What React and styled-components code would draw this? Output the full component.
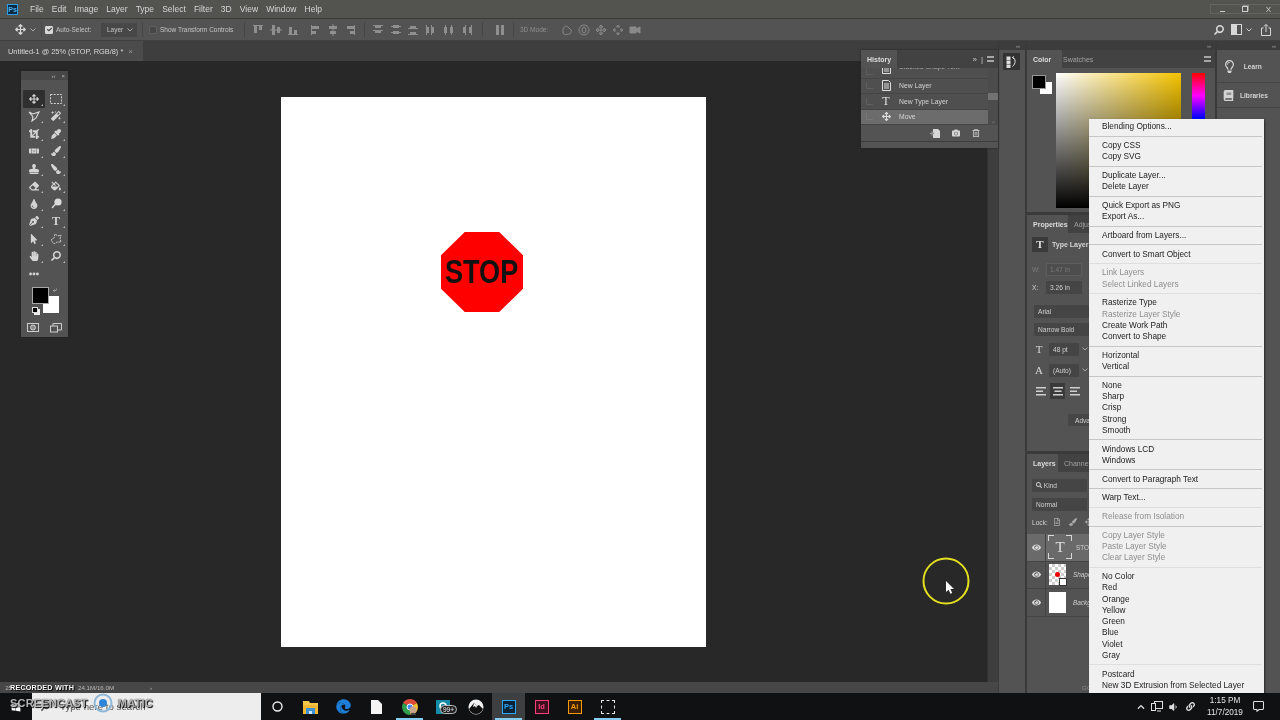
import React from 'react'
import styled, { createGlobalStyle } from 'styled-components'
import {
  FaArrowsAlt, FaMagic, FaCrop, FaEyeDropper, FaBandAid, FaPaintBrush, FaStamp, FaEraser,
  FaFillDrip, FaTint, FaPenNib, FaMousePointer, FaHandPaper, FaSearch, FaEllipsisH, FaEye,
  FaCamera, FaRegTrashAlt, FaRegLightbulb, FaWindows, FaEdge, FaCheck, FaRegFileAlt, FaBook,
  FaLink, FaRegCommentAlt, FaVolumeDown, FaChevronUp,
} from 'react-icons/fa'

const GlobalStyle = createGlobalStyle`
  html, body { margin: 0; padding: 0; background: #282828; }
  * { box-sizing: border-box; }
  #root { width: 1280px; height: 720px; overflow: hidden; }
`

const Screen = styled.div`
  position: relative;
  width: 1280px;
  height: 720px;
  display: flex;
  flex-direction: column;
  overflow: hidden;
  background: #3a3a3a;
  font-family: 'Liberation Sans', Arial, sans-serif;
  color: #d4d4d4;
  filter: blur(0.4px);
`

/* ---------- menu bar ---------- */
const MenuBar = styled.div`
  height: 18px;
  margin-bottom: 1px;
  flex: none;
  display: flex;
  align-items: center;
  padding-left: 7px;
  background: #53534f;
`
const PsLogo = styled.div`
  width: 11px;
  height: 11px;
  margin-right: 12px;
  display: flex;
  align-items: center;
  justify-content: center;
  border: 1px solid #2f9fe8;
  background: #0b2b45;
  color: #4fb4f2;
  font-size: 7px;
  font-weight: bold;
`
const MenuItems = styled.div`
  display: flex;
  gap: 8.1px;
  font-size: 8.5px;
  color: #d6d6d6;
`
const WindowButtons = styled.div`
  margin-left: auto;
  width: 70px;
  height: 10px;
  display: flex;
  align-items: center;
  justify-content: space-around;
  border: 1px solid #63635f;
  border-right: 0;
  font-size: 8px;
  color: #cfcfcf;
`
const MinLine = styled.span`
  width: 5px;
  height: 1px;
  margin-top: 4px;
  background: #cfcfcf;
`
const RestoreBox = styled.span`
  width: 6px;
  height: 6px;
  border: 1px solid #cfcfcf;
  box-shadow: 1px -1px 0 #8a8a86;
`

/* ---------- options bar ---------- */
const OptionsBar = styled.div`
  height: 22px;
  flex: none;
  display: flex;
  align-items: center;
  background: #535353;
  border-bottom: 1px solid #414141;
  font-size: 6.5px;
  color: #c4c4c4;
`
const Slot = styled.div`
  width: ${p => p.$w}px;
  margin-left: ${p => p.$ml || 0}px;
  flex: none;
  display: flex;
  align-items: center;
  justify-content: ${p => p.$left ? 'flex-start' : 'center'};
  color: ${p => p.$dim ? '#8f8f8f' : 'inherit'};
  white-space: nowrap;
`
const Sep = styled.div`
  width: 1px;
  height: 15px;
  flex: none;
  margin-left: ${p => p.$ml || 0}px;
  background: #464646;
`
const Check = styled.div`
  width: 8px;
  height: 8px;
  flex: none;
  margin-left: ${p => p.$ml || 0}px;
  display: flex;
  align-items: center;
  justify-content: center;
  border-radius: 1px;
  background: ${p => p.$on ? '#d8d8d8' : '#474747'};
  border: 1px solid ${p => p.$on ? '#d8d8d8' : '#5f5f5f'};
  color: #333;
  font-size: 5px;
`
const SelectBox = styled.div`
  width: 36px;
  height: 14px;
  margin-left: ${p => p.$ml || 0}px;
  flex: none;
  display: flex;
  align-items: center;
  justify-content: space-between;
  padding: 0 4px 0 6px;
  background: #474747;
`
const RightTools = styled.div`
  margin-left: auto;
  display: flex;
  align-items: center;
  color: #d8d8d8;
`
const FlippedSearch = styled(FaSearch)`
  transform: scaleX(-1);
`

/* ---------- main area ---------- */
const Main = styled.div`
  flex: 1;
  min-height: 0;
  display: flex;
`
const LeftArea = styled.div`
  position: relative;
  width: 998px;
  flex: none;
  display: flex;
  flex-direction: column;
`
const TabBar = styled.div`
  height: 20px;
  flex: none;
  display: flex;
  background: #3e3e3e;
`
const DocTab = styled.div`
  width: 143px;
  display: flex;
  align-items: center;
  gap: 5px;
  padding-left: 8px;
  background: #4b4b4b;
  font-size: 7.4px;
  color: #d8d8d8;
  white-space: nowrap;
`
const TabClose = styled.span`
  color: #999;
  font-size: 8px;
`
const WorkRow = styled.div`
  flex: 1;
  min-height: 0;
  display: flex;
`
const Workspace = styled.div`
  flex: 1;
  background: #282828;
  padding: 36px 0 0 281px;
`
const VScroll = styled.div`
  width: 11px;
  flex: none;
  background: #3e3e3e;
  border-left: 1px solid #333;
`
const Page = styled.div`
  width: 425px;
  height: 550px;
  padding: 135px 0 0 160px;
  background: #fff;
`
const StopSign = styled.div`
  width: 82px;
  height: 80px;
  display: flex;
  align-items: center;
  justify-content: center;
  background: #fe0000;
  clip-path: polygon(29% 0, 71% 0, 100% 29%, 100% 71%, 71% 100%, 29% 100%, 0 71%, 0 29%);
`
const StopWord = styled.span`
  display: inline-block;
  transform: scaleX(0.82);
  font-family: 'Liberation Sans', sans-serif;
  font-weight: bold;
  font-size: 33px;
  color: #111;
`
const StatusBar = styled.div`
  height: 11px;
  flex: none;
  display: flex;
  align-items: center;
  background: #474747;
  font-size: 6.2px;
  color: #b8b8b8;
  white-space: nowrap;
`

/* ---------- floating tools panel ---------- */
const ToolPanel = styled.div`
  position: absolute;
  left: 21px;
  top: 30px;
  width: 47px;
  height: 266px;
  background: #535353;
  box-shadow: 0 0 2px #1c1c1c;
`
const FloatHead = styled.div`
  height: 9px;
  display: flex;
  align-items: center;
  justify-content: flex-end;
  gap: 6px;
  padding-right: 3px;
  background: #474747;
  font-size: 6px;
  line-height: 1;
  color: #b5b5b5;
`
const ToolGrid = styled.div`
  display: grid;
  grid-template-columns: 22px 22px;
  grid-auto-rows: 17.5px;
  margin: 10px 0 0 2px;
`
const ToolCell = styled.div`
  position: relative;
  display: flex;
  align-items: center;
  justify-content: center;
  font-size: 10px;
  color: #d4d4d4;
  background: ${p => p.$sel ? '#2f2f2f' : 'transparent'};
  border-radius: 1px;
  ${p => p.$flip ? 'svg { transform: scaleX(-1); }' : ''}
  &::after {
    content: '';
    display: ${p => p.$plain ? 'none' : 'block'};
    position: absolute;
    right: 2px;
    bottom: 2px;
    border-left: 2px solid transparent;
    border-bottom: 2px solid #bbb;
  }
`
const ToolLetter = styled.span`
  font-family: 'Liberation Serif', serif;
  font-size: 12px;
  font-weight: bold;
`
const ColorChips = styled.div`
  position: relative;
  height: 29px;
  margin: 4px 0 0 11px;
`
const BackChip = styled.div`
  position: absolute;
  left: 11px;
  top: 9px;
  width: 16px;
  height: 17px;
  background: #fff;
`
const ForeChip = styled.div`
  position: absolute;
  left: 0;
  top: 0;
  width: 17px;
  height: 17px;
  background: #000;
  border: 1px solid #a8a8a8;
`
const SwapMark = styled.div`
  position: absolute;
  left: 21px;
  top: -1px;
  font-size: 7px;
  color: #ddd;
`
const DefaultMark = styled.div`
  position: absolute;
  left: 0;
  top: 20px;
  width: 6px;
  height: 6px;
  background: #000;
  border: 1px solid #ddd;
  box-shadow: 2px 2px 0 #eee;
`
const ToolFoot = styled.div`
  display: flex;
  justify-content: space-between;
  padding: 7px 6px 0 6px;
  color: #cfcfcf;
`

/* ---------- floating history panel ---------- */
const HistoryPanel = styled.div`
  position: absolute;
  left: 861px;
  top: 9px;
  width: 137px;
  height: 98px;
  display: flex;
  flex-direction: column;
  background: #535353;
  box-shadow: 0 0 2px #222;
`
const PanelTabs = styled.div`
  height: 18px;
  flex: none;
  display: flex;
  align-items: center;
  background: #424242;
  font-size: 7px;
  color: #a9a9a9;
`
const PanelTab = styled.div`
  height: 100%;
  width: ${p => p.$w}px;
  display: flex;
  align-items: center;
  padding-left: ${p => p.$pl || 6}px;
  flex: none;
  font-weight: ${p => p.$on ? 'bold' : 'normal'};
  background: ${p => p.$on ? '#535353' : 'transparent'};
  color: ${p => p.$on ? '#dcdcdc' : '#a0a0a0'};
  white-space: nowrap;
`
const PanelMenu = styled.div`
  margin-left: auto;
  display: flex;
  align-items: center;
  gap: 4px;
  padding-right: 4px;
  font-size: 8px;
  color: #c8c8c8;
`
const Burger = styled.span`
  width: 7px;
  height: 6px;
  border-top: 2px solid #a6a6a6;
  border-bottom: 2px solid #a6a6a6;
`
const HistoryBody = styled.div`
  height: 57px;
  flex: none;
  display: flex;
  overflow: hidden;
`
const HistoryList = styled.div`
  flex: 1;
  display: flex;
  flex-direction: column;
  justify-content: flex-end;
`
const HistoryRow = styled.div`
  height: ${p => p.$h || 15.5}px;
  flex: none;
  display: flex;
  align-items: center;
  overflow: hidden;
  background: ${p => p.$on ? '#6c6c6c' : '#4f4f4f'};
  border-bottom: 1px solid #454545;
  font-size: 6.8px;
  color: #d4d4d4;
`
/* the row scrolled half out of the list: content sits above its top edge */
const ScrolledRow = styled(HistoryRow)`
  align-items: flex-start;
  color: #a8a8a8;
  & > span:not(:first-child) {
    margin-top: -5px;
  }
`
const HistoryCheck = styled.span`
  width: 7px;
  height: 7px;
  margin: 0 7px 0 5px;
  flex: none;
  border-left: 1px solid ${p => p.$on ? '#777' : '#5e5e5e'};
  border-bottom: 1px solid ${p => p.$on ? '#777' : '#5e5e5e'};
`
const HistoryIcon = styled.span`
  width: 12px;
  margin-right: 7px;
  flex: none;
  display: flex;
  justify-content: center;
  font-size: 9px;
  color: #dedede;
`
const SerifT = styled.span`
  font-family: 'Liberation Serif', serif;
  font-size: ${p => p.$s || 12}px;
  line-height: 1;
  color: #e2e2e2;
`
const ListScroll = styled.div`
  width: 10px;
  flex: none;
  display: flex;
  flex-direction: column;
  align-items: center;
  background: #4c4c4c;
  font-size: 6px;
  line-height: 8px;
  color: #888;
`
const ScrollTrack = styled.div`
  flex: 1;
  padding-top: 5px;
  width: 100%;
`
const ScrollThumb = styled.div`
  width: 100%;
  height: 7px;
  margin-top: 20px;
  background: #727272;
`
const HistoryTools = styled.div`
  height: 17px;
  flex: none;
  display: flex;
  align-items: center;
  justify-content: flex-end;
  gap: 12px;
  padding-right: 18px;
  font-size: 8px;
  color: #d6d6d6;
  border-bottom: 1px solid #3d3d3d;
`

/* ---------- docked columns ---------- */
const DockStrip = styled.div`
  width: ${p => p.$w}px;
  margin-left: ${p => p.$ml}px;
  flex: none;
  display: flex;
  flex-direction: column;
  background: #535353;
`
const DockTop = styled.div`
  height: 9px;
  flex: none;
  display: flex;
  align-items: center;
  justify-content: flex-end;
  padding-right: ${p => p.$pr || 4}px;
  background: #3c3c3c;
  font-size: 6px;
  line-height: 1;
  color: #b0b0b0;
`
const HistoryBtn = styled.div`
  width: 17px;
  height: 17px;
  margin: 3px 0 0 4px;
  display: flex;
  align-items: center;
  justify-content: center;
  background: #333;
  color: #e0e0e0;
  font-size: 9px;
`
const PanelSection = styled.div`
  height: ${p => p.$h}px;
  flex: none;
  display: flex;
  flex-direction: column;
  background: #535353;
  overflow: hidden;
`
const SectionStack = styled.div`
  background: #3a3a3a;
  flex: 1;
  display: flex;
  flex-direction: column;
  gap: 3px;
  min-height: 0;
`
const ColorBody = styled.div`
  flex: 1;
  display: flex;
  padding: 5px 0 4px 5px;
`
const Chips = styled.div`
  position: relative;
  width: 24px;
  flex: none;
`
const BackSwatch = styled.div`
  position: absolute;
  left: 8px;
  top: 9px;
  width: 12px;
  height: 12px;
  background: #fff;
`
const ForeSwatch = styled.div`
  position: absolute;
  left: 0;
  top: 2px;
  width: 14px;
  height: 14px;
  background: #000;
  border: 1px solid #999;
`
const Spectrum = styled.div`
  width: 125px;
  height: 135px;
  flex: none;
  background:
    linear-gradient(to bottom, rgba(0,0,0,0), #000),
    linear-gradient(to right, #fff, #f4c300);
`
const HueBar = styled.div`
  width: 13px;
  height: 135px;
  margin-left: 11px;
  flex: none;
  background: linear-gradient(to bottom, #f00, #f0f, #00f, #0ff, #0f0, #ff0, #f00);
`
const TypeRow = styled.div`
  height: 23px;
  flex: none;
  display: flex;
  align-items: center;
  padding-left: 5px;
  gap: 4px;
  font-size: 7px;
  font-weight: bold;
  color: #d4d4d4;
  white-space: nowrap;
`
const TypeBadge = styled.div`
  width: 16px;
  height: 15px;
  display: flex;
  align-items: center;
  justify-content: center;
  background: #3a3a3a;
`
const PropRow = styled.div`
  height: ${p => p.$h || 18}px;
  margin-top: ${p => p.$mt || 0}px;
  flex: none;
  display: flex;
  align-items: center;
  padding-left: ${p => p.$pl || 5}px;
  gap: ${p => p.$gap || 3}px;
  font-size: 6.6px;
  color: ${p => p.$dim ? '#7b7b7b' : '#d0d0d0'};
  white-space: nowrap;
`
const FieldLabel = styled.span`
  width: 11px;
  color: inherit;
`
const Field = styled.div`
  width: ${p => p.$w}px;
  height: 13px;
  padding-left: 3px;
  display: flex;
  align-items: center;
  flex: none;
  background: ${p => p.$dim ? '#4d4d4d' : '#454545'};
  border: 1px solid ${p => p.$dim ? '#5d5d5d' : '#454545'};
`
const SizeGlyph = styled.span`
  width: 14px;
  flex: none;
  display: flex;
  justify-content: center;
  font-family: 'Liberation Serif', serif;
  font-size: 11px;
  color: #d8d8d8;
`
const AlignBtn = styled.div`
  width: 15px;
  height: 16px;
  flex: none;
  display: flex;
  align-items: center;
  justify-content: center;
  color: #cfcfcf;
  background: ${p => p.$on ? '#3a3a3a' : 'transparent'};
`
const AdvButton = styled.div`
  margin-left: 36px;
  width: 40px;
  height: 12px;
  padding-left: 7px;
  display: flex;
  align-items: center;
  background: #464646;
`
const LockIcons = styled.span`
  display: flex;
  align-items: center;
  gap: 8px;
  font-size: 8px;
  color: #a8a8a8;
`
const LayerRow = styled.div`
  height: 27.5px;
  flex: none;
  display: flex;
  align-items: center;
  font-size: 6.4px;
  font-style: ${p => p.$it ? 'italic' : 'normal'};
  color: #cfcfcf;
  background: ${p => p.$on ? '#6a6a6a' : 'transparent'};
  border-bottom: 1px solid #444;
  white-space: nowrap;
`
const EyeSlot = styled.div`
  width: 19px;
  height: 100%;
  flex: none;
  display: flex;
  align-items: center;
  justify-content: center;
  font-size: 9px;
  color: #dcdcdc;
  border-right: 1px solid #444;
`
const Thumb = styled.div`
  position: relative;
  width: 17px;
  height: 21px;
  margin: 0 7px 0 3px;
  flex: none;
  display: flex;
  align-items: center;
  justify-content: center;
  background: ${p => p.$checker
    ? 'repeating-conic-gradient(#cfcfcf 0 25%, #fff 0 50%) 0 0 / 6px 6px'
    : '#fff'};
`
const TypeThumb = styled.div`
  position: relative;
  width: 24px;
  height: 24px;
  margin: 0 4px 0 2px;
  flex: none;
  display: flex;
  align-items: center;
  justify-content: center;
  border: 1px solid #d8d8d8;
  &::before {
    content: '';
    position: absolute;
    left: 5px;
    right: 5px;
    top: -1px;
    bottom: -1px;
    border-top: 1px solid #6a6a6a;
    border-bottom: 1px solid #6a6a6a;
  }
  &::after {
    content: '';
    position: absolute;
    left: -1px;
    right: -1px;
    top: 5px;
    bottom: 5px;
    border-left: 1px solid #6a6a6a;
    border-right: 1px solid #6a6a6a;
  }
`
const RedDot = styled.span`
  width: 5px;
  height: 5px;
  border-radius: 50%;
  background: #e00;
`
const SmartMark = styled.span`
  position: absolute;
  right: -1px;
  bottom: -1px;
  width: 8px;
  height: 8px;
  background: #fff;
  border: 1px solid #333;
`
const LayerFoot = styled.div`
  margin-top: auto;
  height: 13px;
  flex: none;
  padding-left: 55px;
  display: flex;
  align-items: center;
  font-size: 6px;
  color: #8d8d8d;
`
const SideItem = styled.div`
  height: ${p => p.$h}px;
  flex: none;
  display: flex;
  align-items: center;
  gap: 6px;
  padding-left: 6px;
  border-bottom: 1px solid #444;
  font-size: 6.6px;
  font-weight: bold;
  color: #d4d4d4;
`

/* ---------- context menu ---------- */
const ContextMenu = styled.div`
  position: absolute;
  left: 1089px;
  top: 119px;
  width: 175px;
  height: 574px;
  background: #f0f0f0;
  box-shadow: 1px 1px 2px rgba(0,0,0,0.5);
  font-size: 8.25px;
  overflow: hidden;
`
const MenuGroup = styled.div`
  padding: 3.25px 0;
  border-bottom: 1px solid ${p => p.$soft ? '#dedede' : '#c6c6c6'};
  margin: 0 2px 0 0;
  &:first-child { padding-top: 2px; }
  &:last-child { border-bottom: 0; }
`
const MenuRow = styled.div`
  height: 11.25px;
  line-height: 11.25px;
  padding-left: 13px;
  white-space: nowrap;
  color: ${p => p.$off ? '#8e8e8e' : '#222'};
`

/* ---------- taskbar ---------- */
const Taskbar = styled.div`
  height: 27px;
  flex: none;
  display: flex;
  align-items: center;
  background: #0f1113;
`
const StartSlot = styled.div`
  width: 32px;
  height: 100%;
  display: flex;
  align-items: center;
  justify-content: center;
  font-size: 10px;
  color: #fff;
`
const SearchBox = styled.div`
  width: 229px;
  height: 100%;
  display: flex;
  align-items: center;
  padding-left: 9px;
  gap: 10px;
  background: #ededed;
  color: #555;
  font-size: 9.7px;
`
const TaskIcons = styled.div`
  display: flex;
  height: 100%;
`
const TaskBtn = styled.div`
  position: relative;
  width: 33px;
  height: 100%;
  display: flex;
  align-items: center;
  justify-content: center;
  background: ${p => p.$active ? '#3d3f41' : 'transparent'};
  &::after {
    content: '';
    display: ${p => p.$open ? 'block' : 'none'};
    position: absolute;
    left: 3px;
    right: 3px;
    bottom: 0;
    height: 2px;
    background: #86cdf2;
  }
`
const AppSquare = styled.div`
  width: 14px;
  height: 14px;
  display: flex;
  align-items: center;
  justify-content: center;
  border: 1px solid ${p => p.$c};
  background: ${p => p.$bg};
  color: ${p => p.$c};
  font-size: 7.5px;
  font-weight: bold;
`
const DashBox = styled.div`
  width: 14px;
  height: 14px;
  border: 1px dashed #e8e8e8;
`
const Badge = styled.span`
  position: absolute;
  left: 14px;
  top: 12px;
  padding: 0 2px;
  border-radius: 5px;
  background: #222;
  border: 1px solid #bbb;
  font-size: 6.5px;
  color: #eee;
`
const Tray = styled.div`
  margin-left: auto;
  height: 100%;
  display: flex;
  align-items: center;
  color: #dedede;
  font-size: 9px;
`
const TraySlot = styled.div`
  width: ${p => p.$w}px;
  flex: none;
  display: flex;
  justify-content: center;
`
const Clock = styled.div`
  width: 52px;
  flex: none;
  text-align: center;
  font-size: 8.2px;
  line-height: 12px;
  color: #e6e6e6;
`

/* ---------- overlays ---------- */
const Watermark = styled.div`
  position: absolute;
  left: 10px;
  top: 683px;
  color: #fff;
  font-weight: bold;
  text-shadow: 0 0 1px #000, 1px 1px 1px #000;
  pointer-events: none;
`
const WatermarkSmall = styled.div`
  font-size: 7.2px;
  line-height: 9px;
  letter-spacing: 0.2px;
`
const WatermarkBig = styled.div`
  display: flex;
  align-items: center;
  margin-top: 1px;
  font-size: 11px;
  letter-spacing: 0.2px;
  gap: 5px;
  color: rgba(255,255,255,0.7);
`
const CursorRing = styled.svg`
  position: absolute;
  left: 920px;
  top: 555px;
  width: 52px;
  height: 54px;
`

/* ---------- drawings ---------- */
const bars = {
  top: [[1, 1, 10, 1], [2, 2, 3, 7], [7, 2, 3, 4]],
  vmid: [[2, 1, 3, 10], [7, 3, 3, 6], [0, 5.5, 12, 1]],
  bottom: [[1, 10, 10, 1], [2, 3, 3, 7], [7, 6, 3, 4]],
  left: [[1, 1, 1, 10], [2, 2, 7, 3], [2, 7, 4, 3]],
  hmid: [[5.5, 0, 1, 12], [2, 2, 8, 3], [3, 7, 6, 3]],
  right: [[10, 1, 1, 10], [3, 2, 7, 3], [6, 7, 4, 3]],
  dtop: [[1, 1, 10, 1], [3, 2, 6, 2], [1, 6, 10, 1], [3, 7, 6, 2]],
  dmid: [[1, 2, 10, 1], [3, 1, 6, 3], [1, 8, 10, 1], [3, 7, 6, 3]],
  dbot: [[3, 2, 6, 2], [1, 4, 10, 1], [3, 8, 6, 2], [1, 10, 10, 1]],
  dleft: [[1, 1, 1, 10], [2, 3, 2, 6], [6, 1, 1, 10], [7, 3, 2, 6]],
  dhmid: [[2, 1, 1, 10], [1, 3, 3, 6], [8, 1, 1, 10], [7, 3, 3, 6]],
  dright: [[4, 1, 1, 10], [2, 3, 2, 6], [10, 1, 1, 10], [8, 3, 2, 6]],
  spread: [[2, 1, 3, 10], [7, 1, 3, 10]],
}

const AlignIcon = ({ kind }) => (
  <svg width="12" height="12" viewBox="0 0 12 12" fill="#8f8f8f">
    {bars[kind].map((b, i) => <rect key={i} x={b[0]} y={b[1]} width={b[2]} height={b[3]} />)}
  </svg>
)

const Chevron = ({ c = '#a8a8a8' }) => (
  <svg width="6" height="4" viewBox="0 0 6 4" fill="none" stroke={c}><path d="M0.5 0.5 3 3 5.5 0.5" /></svg>
)

const Marquee = () => (
  <svg width="12" height="10" viewBox="0 0 12 10" fill="none" stroke="#d0d0d0" strokeDasharray="2 1.2"><rect x="0.5" y="0.5" width="11" height="9" /></svg>
)
const Lasso = () => (
  <svg width="12" height="11" viewBox="0 0 12 11" fill="none" stroke="#dcdcdc" strokeWidth="1.1"><path d="M1 1 5 3 11 1 8 7 4 10 5 6Z" /></svg>
)
const Lollipop = () => (
  <svg width="11" height="11" viewBox="0 0 11 11" fill="#dcdcdc"><circle cx="7" cy="4" r="3.6" /><path d="M4.6 6 1 10" stroke="#dcdcdc" strokeWidth="1.4" /></svg>
)
const Blob = () => (
  <svg width="12" height="12" viewBox="0 0 12 12" fill="none" stroke="#c8c8c8" strokeDasharray="2 .8"><path d="M1 7 4 5 5 1 8 3 11 2 10 6 11 9 7 9 4 11Z" /></svg>
)
const MaskIcon = () => (
  <svg width="12" height="9" viewBox="0 0 12 9" fill="none" stroke="#cfcfcf"><rect x=".5" y=".5" width="11" height="8" /><circle cx="6" cy="4.5" r="2.5" fill="#8a8a8a" /></svg>
)
const ScreenIcon = () => (
  <svg width="12" height="10" viewBox="0 0 12 10" fill="none" stroke="#cfcfcf"><rect x=".5" y="3" width="7" height="6" /><path d="M3 3V.5h8.5V7H7.5" /></svg>
)
const NewDocCam = () => (
  <svg width="10" height="9" viewBox="0 0 10 9" fill="#d6d6d6"><path d="M3 0h5l2 2v7H3z" /><path d="M0 4h4v1H0zM1.5 2.5h1v4h-1z" stroke="#535353" strokeWidth=".3" /></svg>
)
const HistoryGlyph = () => (
  <svg width="11" height="12" viewBox="0 0 11 12" fill="none" stroke="#e0e0e0"><rect x="1" y="1" width="3" height="2.4" fill="#e0e0e0" /><rect x="1" y="5" width="3" height="2.4" fill="#e0e0e0" /><rect x="1" y="9" width="3" height="2.4" fill="#e0e0e0" /><path d="M6.5 1.5c3.5 1 3.5 6 0 9M6.5 1.5 8 .5M6.5 1.5 8 3" /></svg>
)
const DocRows = () => (
  <svg width="9" height="11" viewBox="0 0 9 11" fill="none" stroke="#dedede"><path d="M.5.5h6l2 2v8H.5z" /><path d="M2 4h5M2 6h5M2 8h5" /></svg>
)
const WorkspaceBox = () => (
  <svg width="11" height="11" viewBox="0 0 11 11" fill="none" stroke="#d8d8d8"><rect x=".5" y=".5" width="10" height="10" /><rect x="1" y="1" width="5" height="9" fill="#d8d8d8" stroke="none" /></svg>
)
const Share = () => (
  <svg width="10" height="12" viewBox="0 0 10 12" fill="none" stroke="#d8d8d8"><path d="M2.500 4H.5v7.500h9V4h-2M5 8V.5M3 2.500 5 .5l2 2" /></svg>
)
const ThreeD = ({ i }) => (
  <svg width="12" height="12" viewBox="0 0 12 12" fill="none" stroke="#8a8a8a">
    {i === 0 && <path d="M2 6c0-3 3-5 5-3l3 3c1 2-1 5-3 4-1 1-4 1-5-1z" />}
    {i === 1 && <><circle cx="6" cy="6" r="5" /><ellipse cx="6" cy="6" rx="2" ry="3" /></>}
    {i === 2 && <path d="M6 1 8 3H4zM6 11 4 9h4zM1 6l2-2v4zM11 6 9 4v4zM6 3v6M3 6h6" />}
    {i === 3 && <path d="M6 1 7.5 3h-3zM6 11 4.5 9h3zM1 6l2-1.500v3zM11 6 9 4.500v3z" />}
    {i === 4 && <path d="M1 3h6v6H1zM7 5l4-2v6L7 7z" fill="#8a8a8a" />}
  </svg>
)
const FolderIcon = () => (
  <svg width="15" height="14" viewBox="0 0 15 14"><path d="M0 1h6l1 2h8v3H0z" fill="#f4c64c" /><path d="M0 5h15v9H0z" fill="#f2b632" /><path d="M3 8h9v6H3z" fill="#3d8fd6" /><path d="M6 11h3v3H6z" fill="#cfe6f7" /></svg>
)
const FileIcon = () => (
  <svg width="11" height="14" viewBox="0 0 11 14"><path d="M0 0h7l4 4v10H0z" fill="#f4f4f4" /></svg>
)
const ChromeIcon = () => (
  <svg width="16" height="16" viewBox="0 0 16 16">
    <path d="M8 8 1.100 4A8 8 0 0 1 14.900 4z" fill="#dd4b39" />
    <path d="M8 8 14.900 4A8 8 0 0 1 8 16z" fill="#f6c02c" />
    <path d="M8 8 8 16A8 8 0 0 1 1.100 4z" fill="#2f9e4f" />
    <circle cx="8" cy="8" r="3" fill="#4a8af4" stroke="#fff" />
    <circle cx="11" cy="11" r="3.5" fill="#c9a48c" />
    <path d="M8 16c0-3 6-3 6 0z" fill="#444" />
  </svg>
)
const MailTile = () => (
  <svg width="14" height="14" viewBox="0 0 14 14"><rect width="14" height="14" fill="#1489a8" /><circle cx="7" cy="6" r="3" fill="none" stroke="#fff" strokeWidth="1.5" /></svg>
)
const PeakIcon = () => (
  <svg width="16" height="16" viewBox="0 0 16 16"><circle cx="8" cy="8" r="7.5" fill="#f3f3f3" /><path d="M1 10 6 4l3 3 2-1 4 4c-1 3-4 5-7 5s-6-2-7-5z" fill="#111" /><path d="M6 4 5 8l2-1 1 2 1-2z" fill="#f3f3f3" /></svg>
)
const NetIcon = () => (
  <svg width="12" height="11" viewBox="0 0 12 11" fill="none" stroke="#dedede"><rect x="3.5" y=".5" width="8" height="7" /><rect x=".5" y="2.5" width="4" height="7" fill="#0f1113" /><path d="M6 10h4" /></svg>
)

const toolRows = [
  [{ el: <FaArrowsAlt />, sel: true }, { el: <Marquee /> }],
  [{ el: <Lasso /> }, { el: <FaMagic /> }],
  [{ el: <FaCrop /> }, { el: <FaEyeDropper /> }],
  [{ el: <FaBandAid /> }, { el: <FaPaintBrush /> }],
  [{ el: <FaStamp /> }, { el: <FaPaintBrush />, flip: true }],
  [{ el: <FaEraser /> }, { el: <FaFillDrip /> }],
  [{ el: <FaTint /> }, { el: <Lollipop /> }],
  [{ el: <FaPenNib /> }, { el: <ToolLetter>T</ToolLetter> }],
  [{ el: <FaMousePointer /> }, { el: <Blob /> }],
  [{ el: <FaHandPaper /> }, { el: <FaSearch />, flip: true }],
  [{ el: <FaEllipsisH />, plain: true }, { el: null, plain: true }],
]

const menuGroups = [
  { items: ['Blending Options...'] },
  { items: ['Copy CSS', 'Copy SVG'] },
  { items: ['Duplicate Layer...', 'Delete Layer'] },
  { items: ['Quick Export as PNG', 'Export As...'] },
  { items: ['Artboard from Layers...'] },
  { items: ['Convert to Smart Object'], soft: true },
  { items: ['~Link Layers', '~Select Linked Layers'], soft: true },
  { items: ['Rasterize Type', '~Rasterize Layer Style', 'Create Work Path', 'Convert to Shape'] },
  { items: ['Horizontal', 'Vertical'] },
  { items: ['None', 'Sharp', 'Crisp', 'Strong', 'Smooth'] },
  { items: ['Windows LCD', 'Windows'] },
  { items: ['Convert to Paragraph Text'] },
  { items: ['Warp Text...'], soft: true },
  { items: ['~Release from Isolation'] },
  { items: ['~Copy Layer Style', '~Paste Layer Style', '~Clear Layer Style'], soft: true },
  { items: ['No Color', 'Red', 'Orange', 'Yellow', 'Green', 'Blue', 'Violet', 'Gray'], soft: true },
  { items: ['Postcard', 'New 3D Extrusion from Selected Layer'] },
]

const menuNames = ['File', 'Edit', 'Image', 'Layer', 'Type', 'Select', 'Filter', '3D', 'View', 'Window', 'Help']

const IconRun = ({ kinds, w, ml }) => (
  <>
    {kinds.map((k, i) => (
      <Slot key={k} $w={w} $ml={i === 0 ? ml : 0}><AlignIcon kind={k} /></Slot>
    ))}
  </>
)

const LinesIcon = ({ mid }) => (
  <svg width="10" height="9" viewBox="0 0 10 9" fill="#cfcfcf">
    <rect x="0" y="0" width="10" height="1.5" /><rect x={mid ? 1.5 : 0} y="3.5" width="7" height="1.5" /><rect x="0" y="7" width="10" height="1.5" />
  </svg>
)

export default function App() {
  return (
    <Screen>
      <GlobalStyle />
      <MenuBar>
        <PsLogo>Ps</PsLogo>
        <MenuItems>
          {menuNames.map(n => <span key={n}>{n}</span>)}
        </MenuItems>
        <WindowButtons>
          <MinLine />
          <RestoreBox />
          <span>X</span>
        </WindowButtons>
      </MenuBar>

      <OptionsBar>
        <Slot $w={14} $ml={13}><FaArrowsAlt size={11} color="#d8d8d8" /></Slot>
        <Slot $w={12}><Chevron /></Slot>
        <Sep $ml={2} />
        <Check $ml={3} $on><FaCheck /></Check>
        <Slot $w={36} $ml={3} $left>Auto-Select:</Slot>
        <SelectBox $ml={9}>Layer <Chevron /></SelectBox>
        <Sep $ml={5} />
        <Check $ml={6} />
        <Slot $w={74} $ml={3} $left>Show Transform Controls</Slot>
        <Sep $ml={10} />
        <IconRun kinds={['top', 'vmid', 'bottom']} w={17.5} ml={4.25} />
        <IconRun kinds={['left', 'hmid', 'right']} w={17} ml={5.75} />
        <Sep $ml={5.5} />
        <IconRun kinds={['dtop', 'dmid', 'dbot']} w={17.5} ml={4.25} />
        <IconRun kinds={['dleft', 'dhmid', 'dright']} w={18} ml={0.25} />
        <Sep $ml={6} />
        <IconRun kinds={['spread']} w={18} ml={8} />
        <Sep $ml={4} />
        <Slot $w={29} $ml={6} $left $dim>3D Mode:</Slot>
        {[0, 1, 2, 3, 4].map(i => <Slot key={i} $w={17.2} $ml={i === 0 ? 9 : 0}><ThreeD i={i} /></Slot>)}
        <RightTools>
          <Slot $w={20}><FlippedSearch size={10} /></Slot>
          <Slot $w={15}><WorkspaceBox /></Slot>
          <Slot $w={10}><Chevron c="#d0d0d0" /></Slot>
          <Slot $w={18} $ml={3}><Share /></Slot>
          <Slot $w={5} />
        </RightTools>
      </OptionsBar>

      <Main>
        <LeftArea>
          <TabBar>
            <DocTab>Untitled-1 @ 25% (STOP, RGB/8) * <TabClose>×</TabClose></DocTab>
          </TabBar>
          <WorkRow>
            <Workspace>
              <Page>
                <StopSign><StopWord>STOP</StopWord></StopSign>
              </Page>
            </Workspace>
            <VScroll />
          </WorkRow>
          <StatusBar>
            <Slot $w={78} $left>&nbsp;&nbsp;&nbsp;25%&nbsp;&nbsp;&nbsp;Doc:</Slot>
            <Slot $w={72} $left>24.1M/16.0M</Slot>
            <span>›</span>
          </StatusBar>

          <ToolPanel>
            <FloatHead><span>‹‹</span><span>×</span></FloatHead>
            <ToolGrid>
              {toolRows.flat().map((t, i) => (
                <ToolCell key={i} $sel={t.sel} $plain={t.plain} $flip={t.flip}>{t.el}</ToolCell>
              ))}
            </ToolGrid>
            <ColorChips>
              <BackChip />
              <ForeChip />
              <SwapMark>⤶</SwapMark>
              <DefaultMark />
            </ColorChips>
            <ToolFoot><MaskIcon /><ScreenIcon /></ToolFoot>
          </ToolPanel>

          <HistoryPanel>
            <PanelTabs>
              <PanelTab $w={36} $on>History</PanelTab>
              <PanelMenu>»<span>|</span><Burger /></PanelMenu>
            </PanelTabs>
            <HistoryBody>
              <HistoryList>
                <ScrolledRow $h={10.5}>
                  <HistoryCheck />
                  <HistoryIcon><DocRows /></HistoryIcon>
                  <span>Stacked Shape Text</span>
                </ScrolledRow>
                <HistoryRow><HistoryCheck /><HistoryIcon><DocRows /></HistoryIcon>New Layer</HistoryRow>
                <HistoryRow><HistoryCheck /><HistoryIcon><SerifT>T</SerifT></HistoryIcon>New Type Layer</HistoryRow>
                <HistoryRow $on><HistoryCheck $on /><HistoryIcon><FaArrowsAlt /></HistoryIcon>Move</HistoryRow>
              </HistoryList>
              <ListScroll>
                <ScrollTrack>
                  <ScrollThumb />
                </ScrollTrack>
                <span>⌄</span>
              </ListScroll>
            </HistoryBody>
            <HistoryTools>
              <NewDocCam />
              <FaCamera />
              <FaRegTrashAlt />
            </HistoryTools>
          </HistoryPanel>
        </LeftArea>

        <DockStrip $w={26} $ml={1}>
          <DockTop $pr={5}>‹‹</DockTop>
          <HistoryBtn><HistoryGlyph /></HistoryBtn>
        </DockStrip>

        <DockStrip $w={188} $ml={2}>
          <DockTop>››</DockTop>
          <SectionStack>
            <PanelSection $h={162}>
              <PanelTabs>
                <PanelTab $w={35} $on>Color</PanelTab>
                <PanelTab $w={40} $pl={1}>Swatches</PanelTab>
                <PanelMenu><Burger /></PanelMenu>
              </PanelTabs>
              <ColorBody>
                <Chips>
                  <BackSwatch />
                  <ForeSwatch />
                </Chips>
                <Spectrum />
                <HueBar />
              </ColorBody>
            </PanelSection>

            <PanelSection $h={236}>
              <PanelTabs>
                <PanelTab $w={41} $on>Properties</PanelTab>
                <PanelTab $w={50}>Adjustments</PanelTab>
              </PanelTabs>
              <TypeRow>
                <TypeBadge><SerifT $s={11}>T</SerifT></TypeBadge>
                Type Layer
              </TypeRow>
              <PropRow $mt={4} $dim><FieldLabel>W:</FieldLabel><Field $w={36} $dim>1.47 in</Field></PropRow>
              <PropRow><FieldLabel>X:</FieldLabel><Field $w={36}>3.26 in</Field></PropRow>
              <PropRow $mt={6} $pl={7}><Field $w={60}>Arial</Field></PropRow>
              <PropRow $pl={7}><Field $w={60}>Narrow Bold</Field></PropRow>
              <PropRow $h={20} $mt={1}><SizeGlyph>T</SizeGlyph><Field $w={30}>48 pt</Field><Chevron /></PropRow>
              <PropRow $h={20} $mt={1}><SizeGlyph>A</SizeGlyph><Field $w={30}>(Auto)</Field><Chevron /></PropRow>
              <PropRow $h={20} $mt={1} $pl={6} $gap={2}>
                <AlignBtn><LinesIcon /></AlignBtn>
                <AlignBtn $on><LinesIcon mid /></AlignBtn>
                <AlignBtn><LinesIcon /></AlignBtn>
              </PropRow>
              <PropRow $h={20} $mt={9}><AdvButton>Advanced</AdvButton></PropRow>
            </PanelSection>

            <PanelSection $h={240}>
              <PanelTabs>
                <PanelTab $w={31} $on>Layers</PanelTab>
                <PanelTab $w={40} $pl={6}>Channels</PanelTab>
              </PanelTabs>
              <PropRow $mt={4}><Field $w={55}><FaSearch size={6} />&nbsp;Kind</Field><Chevron /></PropRow>
              <PropRow $mt={1}><Field $w={55}>Normal</Field></PropRow>
              <PropRow $gap={5}>Lock: <LockIcons><FaRegFileAlt /><FaPaintBrush /><FaArrowsAlt /></LockIcons></PropRow>
              <PropRow $h={3} />
              <LayerRow $on>
                <EyeSlot><FaEye /></EyeSlot>
                <TypeThumb><SerifT $s={15}>T</SerifT></TypeThumb>
                STOP
              </LayerRow>
              <LayerRow $it>
                <EyeSlot><FaEye /></EyeSlot>
                <Thumb $checker><RedDot /><SmartMark /></Thumb>
                Shape 1
              </LayerRow>
              <LayerRow $it>
                <EyeSlot><FaEye /></EyeSlot>
                <Thumb />
                Background
              </LayerRow>
              <LayerFoot>GO</LayerFoot>
            </PanelSection>
          </SectionStack>
        </DockStrip>

        <DockStrip $w={63} $ml={2}>
          <DockTop>‹‹</DockTop>
          <SideItem $h={33}><FaRegLightbulb size={13} /> &nbsp;Learn</SideItem>
          <SideItem $h={25}><FaBook size={11} /> Libraries</SideItem>
        </DockStrip>
      </Main>

      <Taskbar>
        <StartSlot><FaWindows /></StartSlot>
        <SearchBox>
          <FlippedSearch size={9} />
          Type here to search
        </SearchBox>
        <TaskIcons>
          <TaskBtn><svg width="11" height="11" viewBox="0 0 11 11" fill="none" stroke="#eee" strokeWidth="1.4"><circle cx="5.5" cy="5.5" r="4.5" /></svg></TaskBtn>
          <TaskBtn><FolderIcon /></TaskBtn>
          <TaskBtn><FaEdge size={15} color="#1e7fd8" /></TaskBtn>
          <TaskBtn><FileIcon /></TaskBtn>
          <TaskBtn $open><ChromeIcon /></TaskBtn>
          <TaskBtn><MailTile /><Badge>99+</Badge></TaskBtn>
          <TaskBtn><PeakIcon /></TaskBtn>
          <TaskBtn $active $open><AppSquare $c="#31a8ff" $bg="#0a2236">Ps</AppSquare></TaskBtn>
          <TaskBtn><AppSquare $c="#ff3d79" $bg="#3b0f1e">Id</AppSquare></TaskBtn>
          <TaskBtn><AppSquare $c="#ff9a00" $bg="#3a1f00">Ai</AppSquare></TaskBtn>
          <TaskBtn $open><DashBox /></TaskBtn>
        </TaskIcons>
        <Tray>
          <TraySlot $w={16}><FaChevronUp size={8} /></TraySlot>
          <TraySlot $w={16}><NetIcon /></TraySlot>
          <TraySlot $w={16}><FaVolumeDown size={10} /></TraySlot>
          <TraySlot $w={18}><FaLink size={9} /></TraySlot>
          <Clock>1:15 PM<br />11/7/2019</Clock>
          <TraySlot $w={14}><FaRegCommentAlt size={11} /></TraySlot>
          <TraySlot $w={15} />
        </Tray>
      </Taskbar>

      <ContextMenu>
        {menuGroups.map((g, i) => (
          <MenuGroup key={i} $soft={g.soft}>
            {g.items.map(t => (
              <MenuRow key={t} $off={t[0] === '~'}>{t.replace('~', '')}</MenuRow>
            ))}
          </MenuGroup>
        ))}
      </ContextMenu>

      <Watermark>
        <WatermarkSmall>RECORDED WITH</WatermarkSmall>
        <WatermarkBig>
          SCREENCAST
          <svg width="20" height="20" viewBox="0 0 20 20"><circle cx="10" cy="10" r="8.5" fill="none" stroke="#8fb8d8" strokeWidth="2" /><circle cx="10" cy="10" r="4" fill="#2f86d8" /></svg>
          MATIC
        </WatermarkBig>
      </Watermark>

      <CursorRing viewBox="0 0 52 54">
        <circle cx="26" cy="26" r="22.5" fill="none" stroke="#e3df1e" strokeWidth="2" />
        <path d="M26 26v11l2.600-2.200 1.800 4 1.800-.8-1.800-4h3.600z" fill="#fff" />
      </CursorRing>
    </Screen>
  )
}
